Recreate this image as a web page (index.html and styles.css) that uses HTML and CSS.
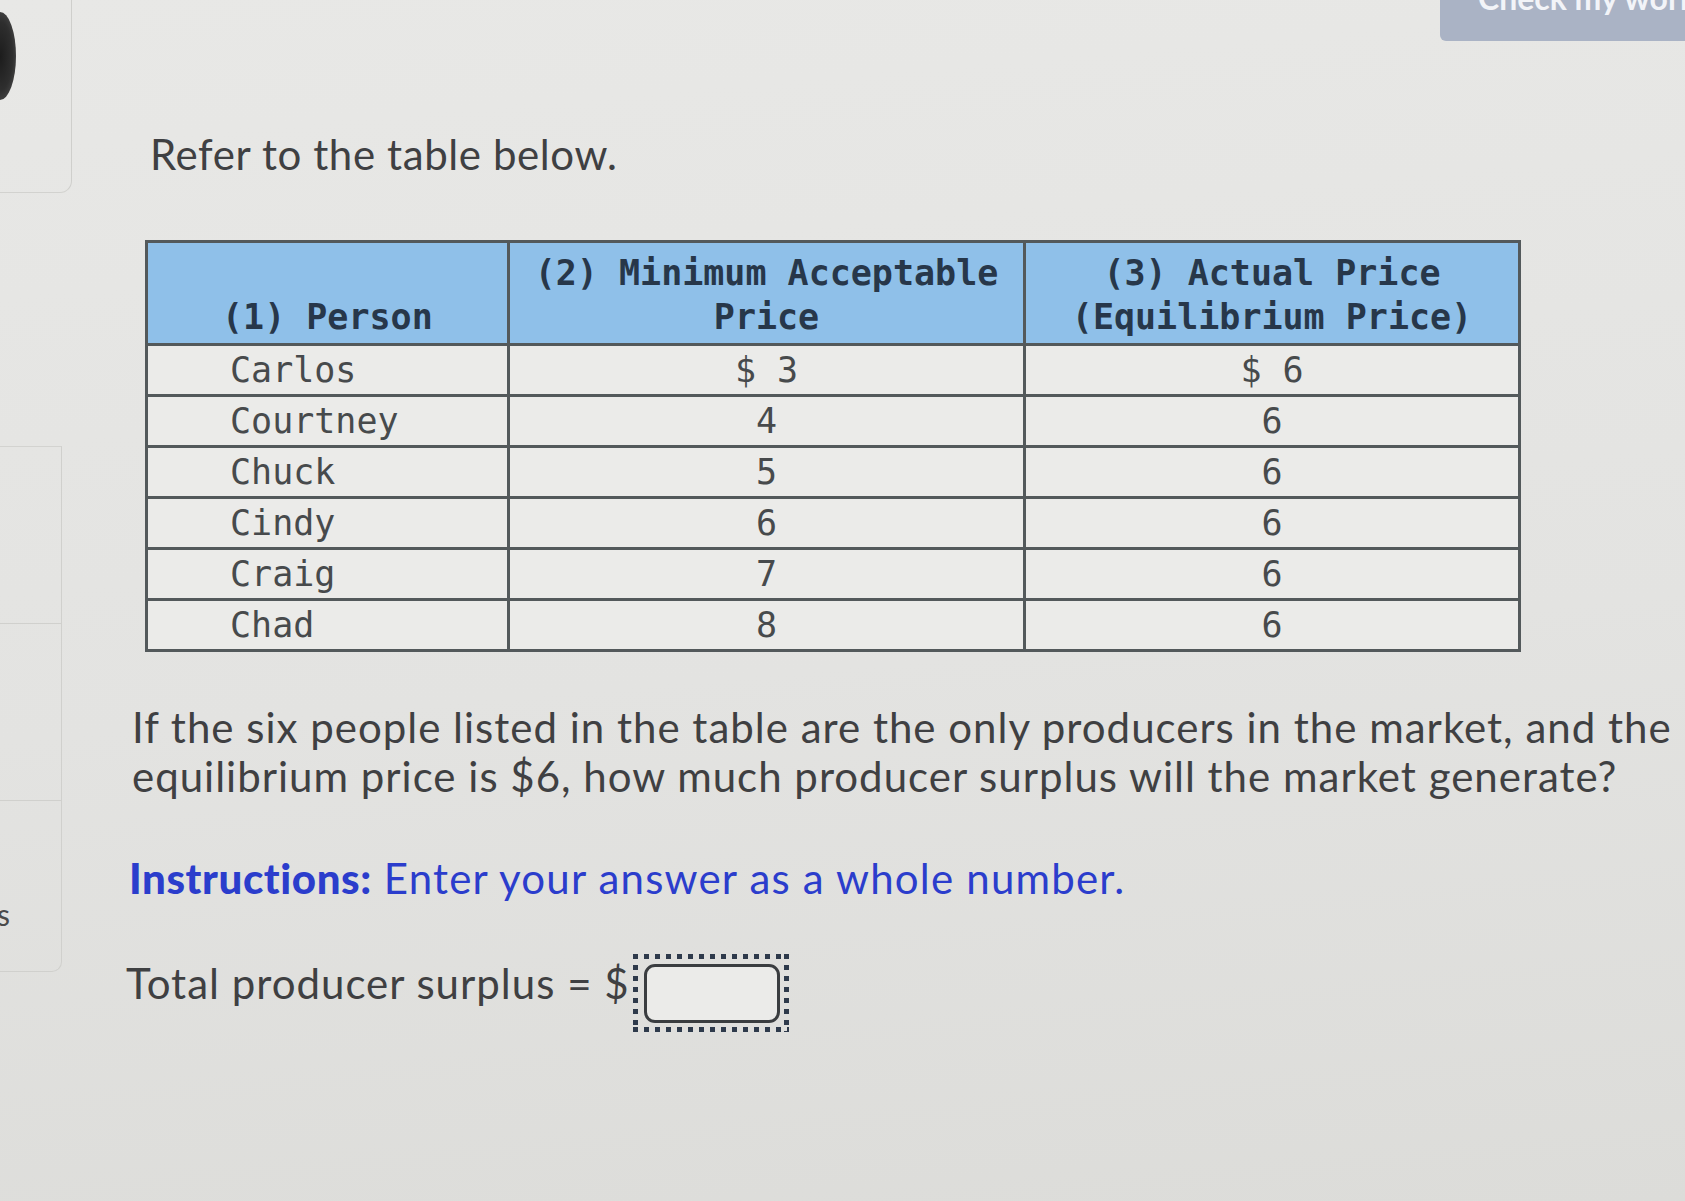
FILE: index.html
```html
<!DOCTYPE html>
<html lang="en">
<head>
<meta charset="utf-8">
<title>Producer surplus</title>
<link rel="stylesheet" href="styles.css">
</head>
<body>
<div class="screen">
  <aside class="rail">
    <div class="rail-top"><div class="knob"></div></div>
    <div class="rail-group">
      <div class="rail-item"></div>
      <div class="rail-item"></div>
      <div class="rail-item rail-last"><span class="rail-label">s</span></div>
    </div>
  </aside>
  <main class="content">
    <div class="topbar"><button class="check" type="button"><span>Check my work</span></button></div>
    <p class="lead">Refer to the table below.</p>
    <table class="data">
      <thead>
        <tr>
          <th class="c1">(1) Person</th>
          <th class="c2">(2) Minimum Acceptable<br>Price</th>
          <th class="c3">(3) Actual Price<br>(Equilibrium Price)</th>
        </tr>
      </thead>
      <tbody>
        <tr><td class="name">Carlos</td><td class="num">$ 3</td><td class="num">$ 6</td></tr>
        <tr><td class="name">Courtney</td><td class="num">4</td><td class="num">6</td></tr>
        <tr><td class="name">Chuck</td><td class="num">5</td><td class="num">6</td></tr>
        <tr><td class="name">Cindy</td><td class="num">6</td><td class="num">6</td></tr>
        <tr><td class="name">Craig</td><td class="num">7</td><td class="num">6</td></tr>
        <tr><td class="name">Chad</td><td class="num">8</td><td class="num">6</td></tr>
      </tbody>
    </table>
    <p class="question">If the six people listed in the table are the only producers in the market, and the<br>equilibrium price is $6, how much producer surplus will the market generate?</p>
    <p class="instructions"><strong>Instructions:</strong> Enter your answer as a whole number.</p>
    <div class="answer">
      <span class="answer-label">Total producer surplus = $</span>
      <span class="ring"><span class="field"></span></span>
    </div>
  </main>
</div>
</body>
</html>
```
FILE: styles.css
```css
html, body {
  margin: 0;
  padding: 0;
  height: 100%;
  overflow: hidden;
}
body {
  background: linear-gradient(175deg, #e8e8e6 0%, #e3e3e1 55%, #dcdcd9 100%);
  font-family: "Lato", "Liberation Sans", sans-serif;
  color: #3f4042;
}
.screen {
  display: flex;
  min-height: 100%;
}
.rail {
  width: 72px;
  flex: none;
  display: flex;
  flex-direction: column;
}
.rail-top {
  height: 193px;
  box-sizing: border-box;
  border-right: 1px solid #cfcfcc;
  border-bottom: 1px solid #d2d2cf;
  border-bottom-right-radius: 12px;
  padding-top: 12px;
}
.knob {
  width: 16px;
  height: 88px;
  border-radius: 0 100% 100% 0 / 0 50% 50% 0;
  background: radial-gradient(ellipse at 0 50%, #1c1c1c 0%, #2e2e2e 55%, #5a5a5a 100%);
}
.rail-group {
  margin-top: 253px;
  width: 62px;
  box-sizing: border-box;
  border-right: 1px solid #d0d0cd;
  border-bottom: 1px solid #d0d0cd;
  border-bottom-right-radius: 10px;
  border-top: 1px solid #d3d3d0;
}
.rail-item {
  height: 176px;
  border-bottom: 1px solid #d0d0cd;
}
.rail-last {
  border-bottom: none;
  height: 170px;
  display: flex;
  align-items: flex-start;
}
.rail-label {
  margin-top: 98px;
  margin-left: -3px;
  font-size: 30px;
  line-height: 30px;
  color: #4a4a4a;
}
.content {
  flex: 1;
  min-width: 0;
}
.topbar {
  display: flex;
  justify-content: flex-end;
  height: 41px;
}
.check {
  width: 320px;
  height: 41px;
  margin-right: -75px;
  border: none;
  border-radius: 0 0 0 6px;
  background: #aab3c5;
  color: #f2f4f8;
  font-family: "Lato", "Liberation Sans", sans-serif;
  font-weight: 700;
  font-size: 32px;
  padding: 0 0 0 38px;
  text-align: left;
  overflow: hidden;
  display: flex;
  align-items: flex-start;
}
.check span {
  display: block;
  line-height: 32px;
  margin-top: -18px;
}
.lead {
  margin: 89px 0 0 78px;
  font-size: 42px;
  letter-spacing: 0.6px;
  line-height: 48px;
}
.data {
  margin: 62px 0 0 73px;
  border-collapse: collapse;
  font-family: "DejaVu Sans Mono", "Liberation Mono", monospace;
  font-size: 35px;
}
.data th, .data td {
  border: 3px solid #53595b;
  padding: 0;
}
.data th {
  background: #8fc0e9;
  color: #27374a;
  font-weight: 700;
  line-height: 44px;
  height: 96px;
  vertical-align: bottom;
  padding-bottom: 4px;
}
.data .c1 { width: 362px; text-align: left; padding-left: 74px; box-sizing: border-box; }
.data .c2 { width: 513px; text-align: center; }
.data .c3 { width: 492px; text-align: center; }
.data td {
  background: #ebebe9;
  color: #474a4c;
  height: 48px;
  line-height: 44px;
}
.data .name { padding-left: 82px; text-align: left; }
.data .num { text-align: center; }
.question {
  margin: 51px 0 0 60px;
  font-size: 42px;
  letter-spacing: 1px;
  line-height: 49px;
  white-space: nowrap;
}
.instructions {
  margin: 53px 0 0 57px;
  font-size: 42px;
  letter-spacing: 1.2px;
  line-height: 48px;
  color: #2b3dcc;
  white-space: nowrap;
}
.instructions strong {
  font-weight: 900;
  letter-spacing: 0.6px;
}
.answer {
  margin: 52px 0 0 54px;
  display: flex;
  align-items: center;
}
.answer-label {
  font-size: 42px;
  letter-spacing: 1px;
  line-height: 48px;
  padding-bottom: 20px;
  margin-right: 3px;
}
.ring {
  display: block;
  width: 156px;
  height: 78px;
  box-sizing: border-box;
  padding: 10px 9px 9px 11px;
  background:
    repeating-linear-gradient(90deg, #2e3a4b 0 5px, transparent 5px 11px) top left / 100% 5px no-repeat,
    repeating-linear-gradient(90deg, #2e3a4b 0 5px, transparent 5px 11px) bottom left / 100% 5px no-repeat,
    repeating-linear-gradient(180deg, #2e3a4b 0 5px, transparent 5px 11px) top left / 5px 100% no-repeat,
    repeating-linear-gradient(180deg, #2e3a4b 0 5px, transparent 5px 11px) top right / 5px 100% no-repeat;
}
.field {
  display: block;
  height: 100%;
  box-sizing: border-box;
  border: 3px solid #3a3d40;
  border-radius: 11px;
  background: #ebebe9;
}
```
